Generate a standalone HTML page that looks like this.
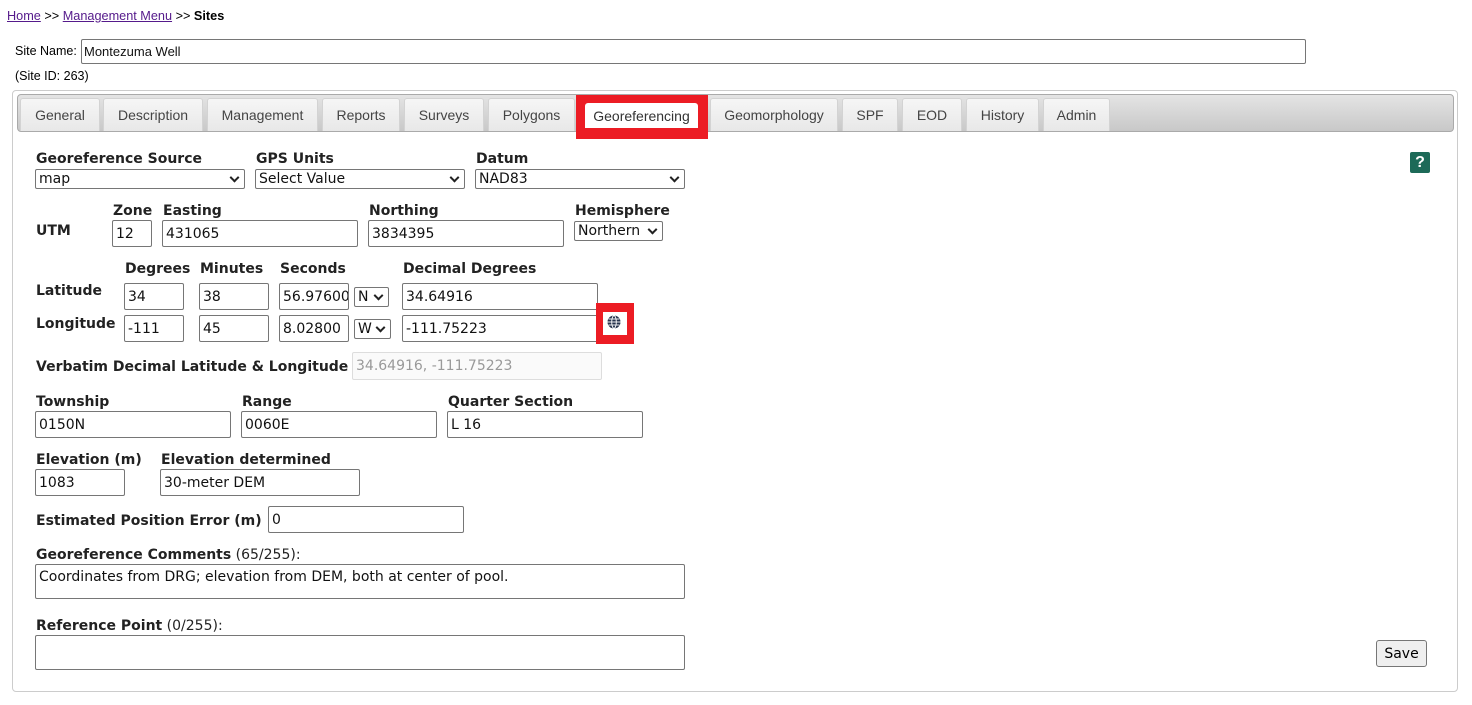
<!DOCTYPE html>
<html><head><meta charset="utf-8"><style>
body{margin:0;width:1472px;height:705px;background:#fff;position:relative;font-family:"Liberation Sans",Arial,sans-serif;overflow:hidden}
.a{position:absolute;white-space:nowrap}
.f{font-family:"DejaVu Sans",Verdana,sans-serif;font-size:14px;color:#222;margin-top:2px}
.b{font-weight:bold}
.i{position:absolute;box-sizing:border-box;border:1px solid #767676;border-radius:2px;background:#fff;font-family:"DejaVu Sans",Verdana,sans-serif;font-size:14px;color:#111;padding-left:3px;display:flex;align-items:center;overflow:hidden;white-space:nowrap}
.s::after{content:"";position:absolute;right:6px;top:50%;width:5px;height:5px;border-right:2px solid #222;border-bottom:2px solid #222;transform:translateY(-70%) rotate(45deg)}
.tab{position:absolute;top:98px;height:33px;box-sizing:border-box;border:1px solid #d3d3d3;border-bottom:none;border-radius:3px 3px 0 0;background:linear-gradient(#f6f6f6,#e8e8e8);font-size:14px;color:#444;display:flex;align-items:center;justify-content:center}
a{color:#551a8b}
</style></head><body>
<div class="a" style="left:7px;top:9px;font-size:12.7px;color:#000"><a href="#">Home</a> &gt;&gt; <a href="#">Management Menu</a> &gt;&gt; <b>Sites</b></div>
<div class="a" style="left:15px;top:44px;font-size:12.5px">Site Name:</div>
<div class="i" style="left:81px;top:39px;width:1225px;height:25px;font-family:'Liberation Sans',Arial;font-size:13px;padding-left:2px">Montezuma Well</div>
<div class="a" style="left:15px;top:69px;font-size:12.5px">(Site ID: 263)</div>

<div class="a" style="left:12px;top:90px;width:1446px;height:602px;box-sizing:border-box;border:1px solid #ccc;border-radius:4px"></div>
<div class="a" style="left:17px;top:94px;width:1437px;height:38px;box-sizing:border-box;border:1px solid #aaa;border-radius:4px;background:linear-gradient(#e4e4e4,#c8c8c8)"></div>
<div class="tab" style="left:20px;width:80px">General</div>
<div class="tab" style="left:103px;width:100px">Description</div>
<div class="tab" style="left:207px;width:111px">Management</div>
<div class="tab" style="left:322px;width:78px">Reports</div>
<div class="tab" style="left:404px;width:80px">Surveys</div>
<div class="tab" style="left:488px;width:87px">Polygons</div>
<div class="a" style="left:576px;top:95px;width:132px;height:44px;background:#ec1c24"></div>
<div class="tab" style="left:585px;top:103px;width:113px;height:25px;background:#fff;border:none;color:#333">Georeferencing</div>
<div class="tab" style="left:710px;width:128px">Geomorphology</div>
<div class="tab" style="left:842px;width:56px">SPF</div>
<div class="tab" style="left:902px;width:60px">EOD</div>
<div class="tab" style="left:966px;width:73px">History</div>
<div class="tab" style="left:1043px;width:67px">Admin</div>
<div class="a" style="left:1410px;top:152px;width:20px;height:21px;background:#1d6a58;border-radius:2px;color:#fff;font:bold 16px 'Liberation Sans';text-align:center;line-height:21px">?</div>

<div class="a f b" style="left:36px;top:149px">Georeference Source</div>
<div class="a f b" style="left:256px;top:149px">GPS Units</div>
<div class="a f b" style="left:476px;top:149px">Datum</div>
<div class="i s" style="left:35px;top:169px;width:210px;height:20px">map</div>
<div class="i s" style="left:255px;top:169px;width:210px;height:20px">Select Value</div>
<div class="i s" style="left:475px;top:169px;width:210px;height:20px">NAD83</div>

<div class="a f b" style="left:113px;top:201px">Zone</div>
<div class="a f b" style="left:163px;top:201px">Easting</div>
<div class="a f b" style="left:369px;top:201px">Northing</div>
<div class="a f b" style="left:575px;top:201px">Hemisphere</div>
<div class="a f b" style="left:36px;top:221px">UTM</div>
<div class="i" style="left:112px;top:220px;width:40px;height:27px">12</div>
<div class="i" style="left:162px;top:220px;width:196px;height:27px">431065</div>
<div class="i" style="left:368px;top:220px;width:196px;height:27px">3834395</div>
<div class="i s" style="left:574px;top:221px;width:89px;height:20px;padding-left:3px">Northern</div>

<div class="a f b" style="left:125px;top:259px">Degrees</div>
<div class="a f b" style="left:200px;top:259px">Minutes</div>
<div class="a f b" style="left:280px;top:259px">Seconds</div>
<div class="a f b" style="left:403px;top:259px">Decimal Degrees</div>
<div class="a f b" style="left:36px;top:281px">Latitude</div>
<div class="a f b" style="left:36px;top:314px">Longitude</div>
<div class="i" style="left:124px;top:283px;width:60px;height:27px">34</div>
<div class="i" style="left:199px;top:283px;width:70px;height:27px">38</div>
<div class="i" style="left:279px;top:283px;width:70px;height:27px">56.97600</div>
<div class="i s" style="left:354px;top:287px;width:35px;height:20px;padding-left:3px">N</div>
<div class="i" style="left:402px;top:283px;width:196px;height:27px">34.64916</div>
<div class="i" style="left:124px;top:315px;width:60px;height:27px">-111</div>
<div class="i" style="left:199px;top:315px;width:70px;height:27px">45</div>
<div class="i" style="left:279px;top:315px;width:70px;height:27px">8.02800</div>
<div class="i s" style="left:354px;top:319px;width:37px;height:20px;padding-left:3px">W</div>
<div class="i" style="left:402px;top:315px;width:196px;height:27px">-111.75223</div>
<div class="a" style="left:596px;top:303px;width:38px;height:41px;background:#ec1c24"></div>
<div class="a" style="left:603px;top:312px;width:24px;height:23px;background:#fff"></div>
<svg class="a" style="left:607px;top:315px" width="14" height="14" viewBox="0 0 14 14"><circle cx="7" cy="7" r="6.5" fill="#26334d"/><g stroke="#fff" stroke-width="0.9" fill="none"><ellipse cx="7" cy="7" rx="2.3" ry="6.3"/><line x1="0.5" y1="7" x2="13.5" y2="7"/><line x1="1.5" y1="4" x2="12.5" y2="4"/><line x1="1.5" y1="10" x2="12.5" y2="10"/></g></svg>

<div class="a f b" style="left:36px;top:357px">Verbatim Decimal Latitude &amp; Longitude</div>
<div class="i" style="left:352px;top:352px;width:250px;height:28px;background:#fafafa;border-color:#ddd;color:#999">34.64916, -111.75223</div>

<div class="a f b" style="left:36px;top:392px">Township</div>
<div class="a f b" style="left:242px;top:392px">Range</div>
<div class="a f b" style="left:448px;top:392px">Quarter Section</div>
<div class="i" style="left:35px;top:411px;width:196px;height:27px">0150N</div>
<div class="i" style="left:241px;top:411px;width:196px;height:27px">0060E</div>
<div class="i" style="left:447px;top:411px;width:196px;height:27px">L 16</div>

<div class="a f b" style="left:36px;top:450px">Elevation (m)</div>
<div class="a f b" style="left:161px;top:450px">Elevation determined</div>
<div class="i" style="left:35px;top:469px;width:90px;height:27px">1083</div>
<div class="i" style="left:160px;top:469px;width:200px;height:27px">30-meter DEM</div>

<div class="a f b" style="left:36px;top:511px">Estimated Position Error (m)</div>
<div class="i" style="left:268px;top:506px;width:196px;height:27px">0</div>

<div class="a f" style="left:36px;top:545px"><b>Georeference Comments</b> (65/255):</div>
<div class="i" style="left:35px;top:564px;width:650px;height:35px;align-items:flex-start;padding-top:4px">Coordinates from DRG; elevation from DEM, both at center of pool.</div>
<div class="a f" style="left:36px;top:616px"><b>Reference Point</b> (0/255):</div>
<div class="i" style="left:35px;top:635px;width:650px;height:35px"></div>

<div class="a" style="left:1376px;top:640px;width:51px;height:27px;box-sizing:border-box;border:1px solid #767676;border-radius:3px;background:#efefef;font-family:'DejaVu Sans',Verdana;font-size:14px;display:flex;align-items:center;justify-content:center">Save</div>
</body></html>
